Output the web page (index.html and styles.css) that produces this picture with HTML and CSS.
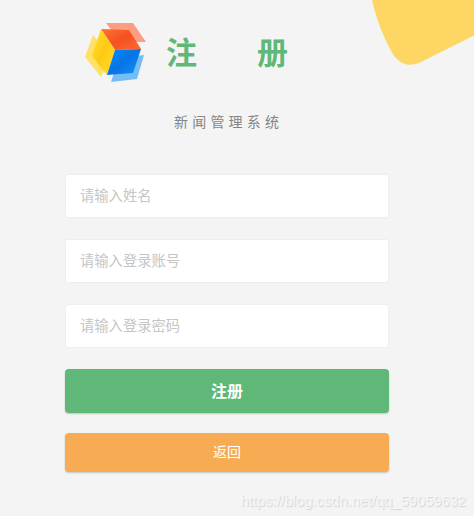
FILE: index.html
```html
<!DOCTYPE html>
<html lang="zh">
<head>
    <meta charset="UTF-8">
    <meta name="viewport" content="width=device-width, initial-scale=1.0">
    <title>注册</title>
    <link rel="stylesheet" href="styles.css">
</head>
<body>
    <div class="page">
        <svg class="corner" width="104" height="68" viewBox="0 0 104 68">
            <path d="M2 0C6 18 12 33 19 47C26 62 36 69 51 62L104 35.500V0Z" fill="#fed663"/>
        </svg>
        <div class="container">
            <div class="header">
                <svg class="logo" width="62" height="62" viewBox="0 0 62 62">
                    <defs>
                        <linearGradient id="red" x1="0" y1="0" x2="1" y2="1">
                            <stop offset="0" stop-color="#ff7335"/>
                            <stop offset=".5" stop-color="#f4511f"/>
                            <stop offset="1" stop-color="#ff6a38"/>
                        </linearGradient>
                        <linearGradient id="yellow" x1="0" y1="0" x2="1" y2="1">
                            <stop offset="0" stop-color="#ffe22c"/>
                            <stop offset=".5" stop-color="#ffc916"/>
                            <stop offset="1" stop-color="#ffe02c"/>
                        </linearGradient>
                        <linearGradient id="blue" x1="0" y1="0" x2="1" y2="1">
                            <stop offset="0" stop-color="#078df8"/>
                            <stop offset=".5" stop-color="#0874e6"/>
                            <stop offset="1" stop-color="#1494fa"/>
                        </linearGradient>
                    </defs>
                    <path d="M21 1H48L61 20H35Z" fill="#fb9d83"/>
                    <path d="M8 13L0 35L16 55L26 34Z" fill="#ffe168"/>
                    <path d="M59 33L52 57L26 60L34 36Z" fill="#75bdf5"/>
                    <path d="M16 7L44 8L56 27L30 28Z" fill="url(#red)"/>
                    <path d="M16 7L30 28L22 53L7 34Z" fill="url(#yellow)"/>
                    <path d="M30 28L56 27L48 51L22 53Z" fill="url(#blue)"/>
                </svg>
                <h1><span>注</span><span>册</span></h1>
            </div>
            <p class="subtitle">新闻管理系统</p>
            <form class="register-form">
                <input type="text" placeholder="请输入姓名">
                <input type="text" placeholder="请输入登录账号">
                <input type="password" placeholder="请输入登录密码">
                <button type="button" class="btn btn-register">注册</button>
                <button type="button" class="btn btn-back">返回</button>
            </form>
        </div>
        <div class="watermark">https://blog.csdn.net/qq_59059632</div>
    </div>
</body>
</html>
```

FILE: styles.css
```css
* {
    box-sizing: border-box;
}

body {
    margin: 0;
    background: #fff;
    font-family: "Liberation Sans", "Noto Sans CJK SC", sans-serif;
}

.page {
    position: relative;
    height: 516px;
    padding: 22px 0 0 65px;
    background: #f4f4f4;
    overflow: hidden;
}

.corner {
    position: absolute;
    top: 0;
    right: 0;
}

.container {
    width: 324px;
}

.header {
    display: flex;
    align-items: center;
    height: 62px;
    padding-left: 20px;
}

.logo {
    flex: none;
}

.header h1 {
    display: flex;
    gap: 60px;
    margin: 2px 0 0 19px;
    color: #5fb878;
    font-size: 31px;
    line-height: 46px;
}

.subtitle {
    margin: 27px 0 0;
    color: #858585;
    font-size: 14px;
    line-height: 22px;
    letter-spacing: 4.2px;
    padding-left: 109px;
}

.register-form {
    display: flex;
    flex-direction: column;
    margin-top: 41px;
}

.register-form input {
    height: 44px;
    margin-bottom: 21px;
    padding: 0 14px;
    border: 1px solid #eee;
    border-radius: 3px;
    background: #fff;
    font-family: inherit;
    font-size: 14.300px;
}

.register-form input::placeholder {
    color: #c6c6c6;
}

.btn {
    border: none;
    border-radius: 4px;
    color: #fff;
    font-family: inherit;
    box-shadow: 0 1px 2px rgba(0, 0, 0, 0.2);
}

.btn-register {
    height: 44px;
    padding-bottom: 3px;
    background: #5fb878;
    font-size: 16px;
    font-weight: bold;
}

.btn-back {
    height: 39px;
    margin-top: 20px;
    padding-bottom: 4px;
    background: #f7ac54;
    font-size: 14px;
}

.watermark {
    position: absolute;
    right: 8px;
    bottom: 5px;
    color: #f6f6f6;
    font-size: 14.700px;
    line-height: 20px;
    text-shadow: 1px 1px 1px #d2d2d2;
}
```
